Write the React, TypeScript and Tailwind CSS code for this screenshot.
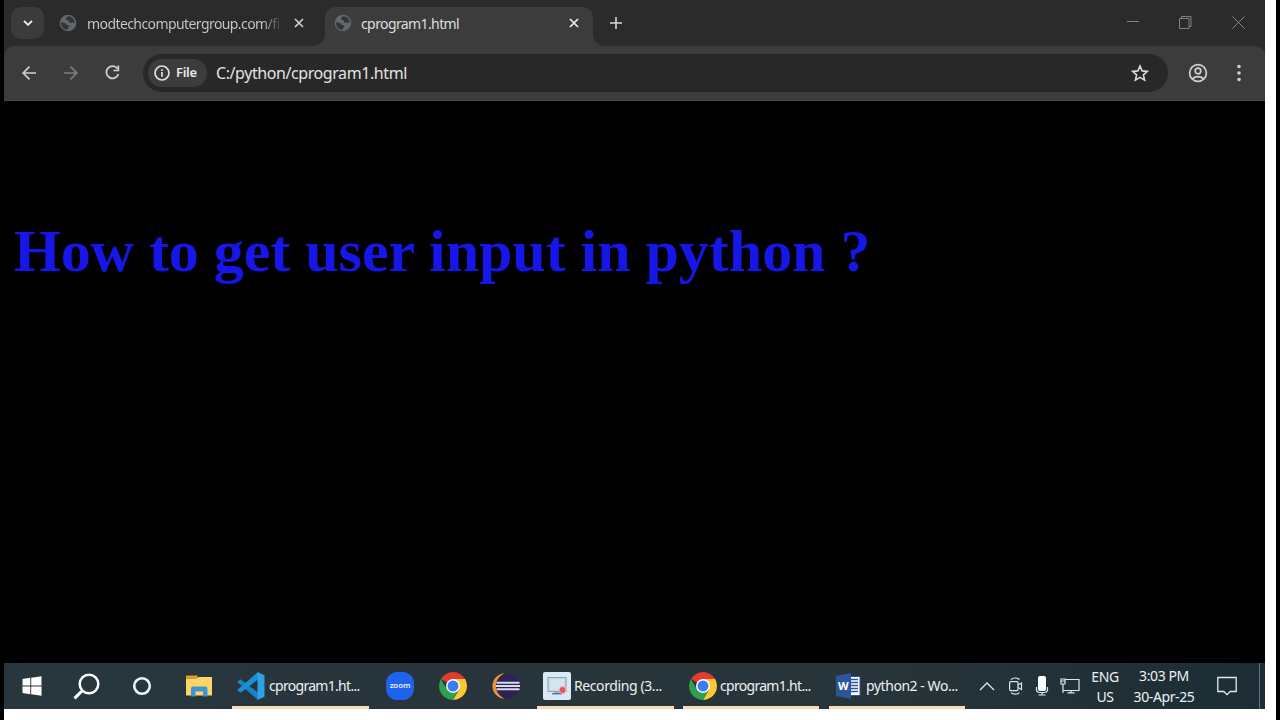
import type { ReactNode } from 'react';

function Globe() {
  return (
    <svg viewBox="0 0 18 18" className="h-[18px] w-[18px] shrink-0">
      <circle cx="9" cy="9" r="8.3" fill="#63676b" />
      <path
        d="M2.500 7.500C3.500 9 5 8.600 6.400 9.200c1 .5.800 1.500 1.700 1.900 1 .4 2 .1 2.200 1 .1.900-1 1.200-1.300 2.200l-.3 1.400C5 15.700 2.100 12.800 2.200 9.200ZM9.500 2.300C8 3 6.800 3.900 7 5c.3 1 1.700.7 2.400 1.400.8.800.2 1.900 1.300 2.300 1.200.4 1.900-.5 3.200-.2l1.800.3C15.700 5.200 12.800 2.500 9.500 2.300Z"
        fill="#343536"
      />
    </svg>
  );
}

function CloseIcon({ className }: { className: string }) {
  return (
    <svg viewBox="0 0 10 10" className={`h-[10px] w-[10px] shrink-0 ${className}`}>
      <path d="M1 1l8 8M9 1l-8 8" stroke="currentColor" strokeWidth="1.7" />
    </svg>
  );
}

function Chrome() {
  return (
    <svg viewBox="0 0 28 28" className="h-7 w-7 shrink-0">
      <path d="M14 14 1.880 7A14 14 0 0 1 26.120 7Z" fill="#e33b2e" />
      <path d="M14 7h12.120A14 14 0 0 1 14 28l6.060-10.500Z" fill="#fcc934" />
      <path d="M1.880 7 7.940 17.500a7 7 0 0 0 12.120 0L14 28A14 14 0 0 1 1.880 7Z" fill="#2da14c" />
      <circle cx="14" cy="14" r="7" fill="#fff" />
      <circle cx="14" cy="14" r="5.500" fill="#3b7ded" />
    </svg>
  );
}

function VSCode() {
  return (
    <svg viewBox="0 0 28 28" className="h-7 w-7 shrink-0">
      <path d="M.5 9.800 3.500 7.300 21 20.500V28L.8 10.500Z" fill="#1583c7" />
      <path d="M.5 18.200 3.500 20.700 21 7.500V0L.8 17.500Z" fill="#1b8fd6" />
      <path d="M20.500 0 27.500 3.300v21.400L20.500 28Z" fill="#2fa0e4" />
    </svg>
  );
}

function Recorder() {
  return (
    <svg viewBox="0 0 28 28" className="h-7 w-7 shrink-0">
      <rect width="28" height="28" rx="2" fill="#dbe9f4" />
      <rect x="5" y="5.500" width="18" height="14" fill="#c7dce8" stroke="#8b9fae" />
      <path d="M7 7.500h14v10H7z" fill="#d3e5ee" />
      <path d="M11 20h6v1.500h-6z" fill="#9db0bd" />
      <path d="M9 21h10v1.500H9z" fill="#3f7fbf" />
      <circle cx="19.500" cy="18" r="3.500" fill="#e9565f" stroke="#f0b8bd" />
    </svg>
  );
}

function Word() {
  return (
    <svg viewBox="0 0 25 26" className="h-[26px] w-[25px] shrink-0">
      <path d="M14 3.500h10v19H14z" fill="#fff" stroke="#2b579a" />
      <path d="M14 6.500h8M14 9.500h8M14 12.500h8M14 15.500h8M14 18.500h8" stroke="#2b579a" strokeWidth="1.300" />
      <path d="M0 3 15 0v26L0 23Z" fill="#2b579a" />
      <text x="7.300" y="17" textAnchor="middle" fontSize="11" fontWeight="700" fill="#fff" fontFamily="Open Sans, sans-serif">
        W
      </text>
    </svg>
  );
}

function Eclipse() {
  return (
    <svg viewBox="0 0 28 28" className="h-7 w-7 shrink-0">
      <path d="M12.500 1.200C5 2 .5 7.500.5 14s4.500 12 12 12.800C7 23.500 4.500 19 4.500 14S7 4.500 12.500 1.200Z" fill="#e9963a" />
      <circle cx="16" cy="14" r="12.200" fill="#2c2255" />
      <path d="M4.500 10.800h23M3.800 14h24.200M4.500 17.200h23" stroke="#dcdbe8" strokeWidth="1.900" />
    </svg>
  );
}

type TaskProps = { icon: ReactNode; label: string; className: string; textClass: string };

function Task({ icon, label, className, textClass }: TaskProps) {
  return (
    <div className={`flex h-full shrink-0 items-center border-b-[3px] border-[#f8dcb8] ${className}`}>
      {icon}
      <span className={`whitespace-nowrap text-sm text-[#eef1f2] ${textClass}`}>{label}</span>
    </div>
  );
}

function Cell({ className, children }: { className: string; children: ReactNode }) {
  return <div className={`flex h-full shrink-0 items-center justify-center ${className}`}>{children}</div>;
}

function TabStrip() {
  return (
    <div className="flex h-[46px] bg-[#2b2b2b] text-[#c9c9c9]">
      <button className="mt-[7px] ml-[7px] flex h-8 w-[33px] shrink-0 items-center justify-center rounded-[10px] bg-[#3b3b3b]">
        <svg viewBox="0 0 10 6" className="h-[6px] w-[10px]">
          <path d="M1 .8 5 4.800 9 .8" fill="none" stroke="#eee" strokeWidth="1.900" />
        </svg>
      </button>
      <div className="ml-[15px] flex h-[46px] w-[254px] shrink-0 items-center">
        <Globe />
        <span className="ml-[10px] w-[194px] bg-gradient-to-r from-[#c9c9c9] from-90% to-[#3c3c3c] bg-clip-text pt-px text-sm tracking-[-0.58px] whitespace-nowrap text-transparent">
          modtechcomputergroup.com/fi
        </span>
        <CloseIcon className="ml-[13px] text-[#d0d0d0]" />
      </div>
      {/* Active tab with its flared feet */}
      <div className="flex items-end">
        <svg viewBox="0 0 12 12" className="h-3 w-3 shrink-0">
          <path d="M12 0v12H0A12 12 0 0 0 12 0Z" fill="#3c3c3c" />
        </svg>
        <div className="flex h-[39px] w-[268px] items-center rounded-t-[10px] bg-[#3c3c3c] pb-[7px] pl-[9px]">
          <Globe />
          <span className="ml-[9px] w-[208px] pt-px text-sm tracking-[-0.6px] text-[#dedede]">cprogram1.html</span>
          <CloseIcon className="text-[#eee]" />
        </div>
        <svg viewBox="0 0 12 12" className="h-3 w-3 shrink-0">
          <path d="M0 0v12h12A12 12 0 0 1 0 0Z" fill="#3c3c3c" />
        </svg>
      </div>
      <svg viewBox="0 0 12 12" className="mt-[17px] ml-[5px] h-3 w-3 shrink-0">
        <path d="M6 0v12M0 6h12" stroke="#d6d6d6" strokeWidth="1.600" />
      </svg>
      <div className="mt-[16px] mr-[20px] ml-auto flex h-[13px] items-center text-[#828282]">
        <svg viewBox="0 0 12 13" className="h-[13px] w-3">
          <path d="M0 5.500h12" stroke="currentColor" />
        </svg>
        <svg viewBox="0 0 13 13" className="ml-[40px] h-[13px] w-[13px]">
          <path d="M.5 2.500h9.500v10H.5zM2.500 2.500V.5h9.500v10H10" fill="none" stroke="currentColor" />
        </svg>
        <svg viewBox="0 0 13 13" className="ml-[40px] h-[13px] w-[13px]">
          <path d="m.5.5 12 12m0-12-12 12" stroke="currentColor" />
        </svg>
      </div>
    </div>
  );
}

function Toolbar() {
  return (
    <div className="bg-[#2b2b2b]">
      <div className="flex h-[55px] items-center rounded-t-[10px] bg-[#3c3c3c] pb-[2px] text-[#cfcfcf] shadow-[inset_0_-1px_0_#4a4a4a]">
        <svg viewBox="0 0 14 14" className="ml-[18px] h-[14px] w-[14px]">
          <path d="M14 7H1.500M7.500.7 1.200 7l6.300 6.300" fill="none" stroke="currentColor" strokeWidth="1.700" />
        </svg>
        <svg viewBox="0 0 14 14" className="ml-[28px] h-[14px] w-[14px] text-[#7d7d7d]">
          <path d="M0 7h12.500M6.500.7 12.800 7l-6.300 6.300" fill="none" stroke="currentColor" strokeWidth="1.700" />
        </svg>
        <svg viewBox="0 0 15 15" className="ml-[27px] h-[15px] w-[15px]">
          <path d="M12.500 3.700A6.100 6.100 0 1 0 13.400 9" fill="none" stroke="currentColor" strokeWidth="1.800" />
          <path d="M14.200.5v5.800H8.400V4.700h4.100V.5Z" fill="currentColor" />
        </svg>
        <div className="ml-[23px] flex h-[38px] w-[1025px] items-center rounded-full bg-[#282828] pl-[5px]">
          <div className="flex h-7 w-[59px] items-center rounded-full bg-[#3c3c3c] pl-[6px]">
            <svg viewBox="0 0 16 16" className="h-4 w-4">
              <circle cx="8" cy="8" r="7" fill="none" stroke="#e0e0e0" strokeWidth="1.700" />
              <path d="M8 7v4.700M8 4.200v1.700" stroke="#e0e0e0" strokeWidth="1.700" />
            </svg>
            <span className="ml-[6px] text-[13px] font-semibold tracking-[-0.3px] text-[#e8e8e8]">File</span>
          </div>
          <span className="ml-[9px] pt-px text-base tracking-[-0.42px] text-[#e3e3e3]">C:/python/cprogram1.html</span>
          <svg viewBox="0 0 18 18" className="mr-[19px] ml-auto h-[18px] w-[18px]">
            <path
              d="m9 2 2.100 4.900 5.300.5-4 3.500 1.200 5.200L9 13.400l-4.600 2.700 1.200-5.200-4-3.500 5.300-.5Z"
              fill="none"
              stroke="#dadada"
              strokeWidth="1.600"
            />
          </svg>
        </div>
        <svg viewBox="0 0 20 20" className="ml-[20px] h-5 w-5">
          <circle cx="10" cy="10" r="8.400" fill="none" stroke="currentColor" strokeWidth="1.700" />
          <circle cx="10" cy="8" r="2.800" fill="none" stroke="currentColor" strokeWidth="1.700" />
          <path d="M4.300 15.800c3.300-3 8.100-3 11.400 0" fill="none" stroke="currentColor" strokeWidth="1.700" />
        </svg>
        <svg viewBox="0 0 4 18" className="ml-[29px] h-[18px] w-1" fill="currentColor">
          <circle cx="2" cy="2.500" r="1.800" />
          <circle cx="2" cy="9" r="1.800" />
          <circle cx="2" cy="15.500" r="1.800" />
        </svg>
      </div>
    </div>
  );
}

function Taskbar() {
  return (
    <div className="flex h-[46px] items-center bg-gradient-to-r from-[#28363d] via-[#27343a] via-70% to-[#1c2d35] text-[#eef1f2]">
      <Cell className="w-[55px]">
        <svg viewBox="0 0 20 20" className="h-5 w-5" fill="#fff">
          <path d="M.5 3 8.300 1.800v7.700H.5zM9.200 1.700 19.500.2v9.300H9.200zM.5 10.400h7.800v7.800L.5 17zM9.200 10.400h10.300v9.300L9.200 18.300z" />
        </svg>
      </Cell>
      <Cell className="w-[55px]">
        <svg viewBox="0 0 27 27" className="h-[27px] w-[27px]" fill="none" stroke="#fff">
          <circle cx="16" cy="11" r="9.300" strokeWidth="2.500" />
          <path d="M9.200 17.700 1.500 25.400" strokeWidth="3" />
        </svg>
      </Cell>
      <Cell className="w-[56px]">
        <svg viewBox="0 0 20 20" className="h-5 w-5">
          <circle cx="10" cy="10" r="7.800" fill="none" stroke="#eef3f5" strokeWidth="2.600" />
        </svg>
      </Cell>
      <Cell className="w-[58px]">
        <svg viewBox="0 0 26 22" className="h-[22px] w-[26px]">
          <path d="M0 .5h11.500v3H0z" fill="#e2a01f" />
          <path d="M0 3.500h10.500L12.500 2H26v18.500H0z" fill="#fbd568" />
          <path d="M5 21.500V13.500a2 2 0 0 1 2-2h12.500a2 2 0 0 1 2 2v8H17v-5H9.500v5Z" fill="#3f95cf" />
        </svg>
      </Cell>
      <Task icon={<VSCode />} label="cprogram1.ht..." className="ml-1 w-[137px] pt-[3px] pl-[5px]" textClass="ml-1 tracking-[-0.7px]" />
      <Cell className="w-[62px]">
        <svg viewBox="0 0 28 28" className="h-7 w-7">
          <rect width="28" height="28" rx="11.500" fill="#1f62ee" />
          <text x="14" y="16" textAnchor="middle" fontSize="7.800" fontWeight="600" fill="#fff" fontFamily="Open Sans, sans-serif">
            zoom
          </text>
        </svg>
      </Cell>
      <Cell className="w-[44px]">
        <Chrome />
      </Cell>
      <Cell className="w-[62px]">
        <Eclipse />
      </Cell>
      <Task icon={<Recorder />} label="Recording (3..." className="w-[137px] pt-[3px] pl-[6px]" textClass="ml-[3px] tracking-[-0.4px]" />
      <Task icon={<Chrome />} label="cprogram1.ht..." className="ml-[9px] w-[136px] pt-[3px] pl-[6px]" textClass="ml-[3px] tracking-[-0.7px]" />
      <Task icon={<Word />} label="python2 - Wo..." className="ml-[10px] w-[136px] pt-[3px] pl-[7px]" textClass="ml-[5px] tracking-[-0.45px]" />
      <Cell className="ml-2 w-7">
        <svg viewBox="0 0 16 9" className="h-[9px] w-4">
          <path d="m1 8 7-7 7 7" fill="none" stroke="#e0e5e7" strokeWidth="1.300" />
        </svg>
      </Cell>
      <Cell className="w-7">
        <svg viewBox="0 0 16 18" className="h-[18px] w-4" fill="none" stroke="#e0e5e7" strokeWidth="1.200">
          <rect x="2.600" y="4.600" width="8.400" height="9" rx="1" />
          <path d="m11 8 3.500-2v6.500L11 10.500M4 2.500c2-2 6.500-2 8.500 0M4 15.700c2 2 6.500 2 8.500 0" />
        </svg>
      </Cell>
      <Cell className="w-[26px]">
        <svg viewBox="0 0 14 20" className="h-5 w-[14px]">
          <rect x="3" y="0" width="8" height="15" rx="2" fill="#fff" />
          <path d="M1.500 11v2.500c0 2 1.500 3 3.500 3h4c2 0 3.500-1 3.500-3V11M7 16.500V19M3.500 19h7" fill="none" stroke="#dfe5e8" strokeWidth="1.200" />
        </svg>
      </Cell>
      <Cell className="w-[30px]">
        <svg viewBox="0 0 20 18" className="h-[18px] w-5" fill="none" stroke="#e0e5e7" strokeWidth="1.200">
          <path d="M5.500 2.500h13.500v11H3.500M11 13.500v2M7.500 15.800h7M3 7v9M1 2h4v5H1zM1.500 4h3" />
        </svg>
      </Cell>
      <Cell className="w-10">
        <div className="pt-px text-center text-sm leading-5 tracking-[-0.4px]">
          <p>ENG</p>
          <p>US</p>
        </div>
      </Cell>
      <Cell className="w-[78px]">
        <div className="text-center text-sm leading-[21px] tracking-[-0.4px] whitespace-nowrap">
          <p>3:03 PM</p>
          <p>30-Apr-25</p>
        </div>
      </Cell>
      <Cell className="w-12">
        <svg viewBox="0 0 20 20" className="h-5 w-5">
          <path d="M.8 1.500h18.400v14h-6L10 18.700l-3.200-3.200h-6Z" fill="none" stroke="#e5e9eb" strokeWidth="1.300" />
        </svg>
      </Cell>
      <div className="ml-[8px] h-full w-px bg-[#66757d]" />
    </div>
  );
}

export default function App() {
  return (
    <div className="h-[720px] w-[1280px] overflow-hidden bg-black px-1 font-['Noto_Sans',sans-serif]">
      <div className="h-full bg-white pr-[11px]">
        <TabStrip />
        <Toolbar />
        <main className="h-[562px] bg-black pt-[115px] pl-[10px]">
          <h1 className="font-['Liberation_Serif',serif] text-[60px] leading-[70px] font-bold tracking-[-0.03px] whitespace-nowrap text-[#1616e8]">
            How to get user input in python ?
          </h1>
        </main>
        <Taskbar />
      </div>
    </div>
  );
}
